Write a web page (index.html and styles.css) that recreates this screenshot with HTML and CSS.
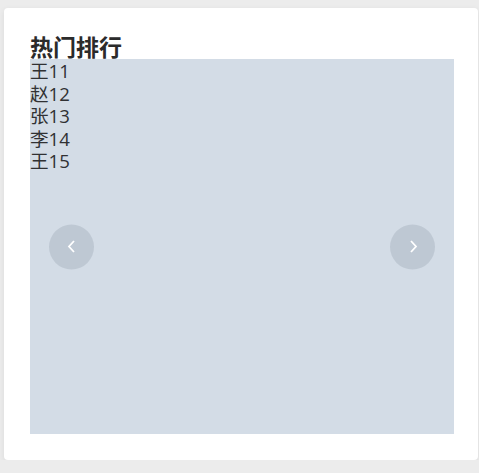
FILE: index.html
```html
<!DOCTYPE html>
<html>
<head>
<meta charset="utf-8">
<link rel="stylesheet" href="styles.css">
</head>
<body>
<div class="card">
  <div class="title">热门排行</div>
  <div class="carousel">
    <ul class="list">
      <li>王11</li>
      <li>赵12</li>
      <li>张13</li>
      <li>李14</li>
      <li>王15</li>
    </ul>
    <button class="arrow left"><svg width="14" height="14" viewBox="0 0 14 14"><path d="M9 1.5 L4 7 L9 12.5" fill="none" stroke="#fff" stroke-width="1.8"/></svg></button>
    <button class="arrow right"><svg width="14" height="14" viewBox="0 0 14 14"><path d="M5 1.5 L10 7 L5 12.5" fill="none" stroke="#fff" stroke-width="1.8"/></svg></button>
  </div>
</div>
</body>
</html>
```
FILE: styles.css
```css
html, body {
  margin: 0;
  padding: 0;
}
body {
  background: #ececec;
  padding: 8px 1px 0 4px;
  font-family: "Open Sans", "Noto Sans CJK SC", sans-serif;
  color: #303133;
}
.card {
  background: #fff;
  border-radius: 4px;
  box-shadow: 0 2px 6px rgba(0,0,0,0.08);
  height: 452px;
  box-sizing: border-box;
  padding: 26px 24px 0 26px;
}
.title {
  font-family: "Noto Sans CJK SC", sans-serif;
  font-weight: 700;
  font-size: 23px;
  line-height: 25px;
  height: 25px;
  color: #2b2b2b;
}
.carousel {
  position: relative;
  width: 424px;
  height: 375px;
  background: #d3dce6;
}
.list {
  list-style: none;
  margin: 0;
  padding: 1px 0 0;
  font-size: 18.6px;
  line-height: 22.5px;
}
.arrow {
  position: absolute;
  top: 50%;
  transform: translateY(-50%);
  width: 45px;
  height: 45px;
  border: none;
  border-radius: 50%;
  background: rgba(31,45,61,0.11);
  padding: 0;
  display: flex;
  align-items: center;
  justify-content: center;
}
.arrow.left { left: 19px; }
.arrow.right { right: 19px; }
```
